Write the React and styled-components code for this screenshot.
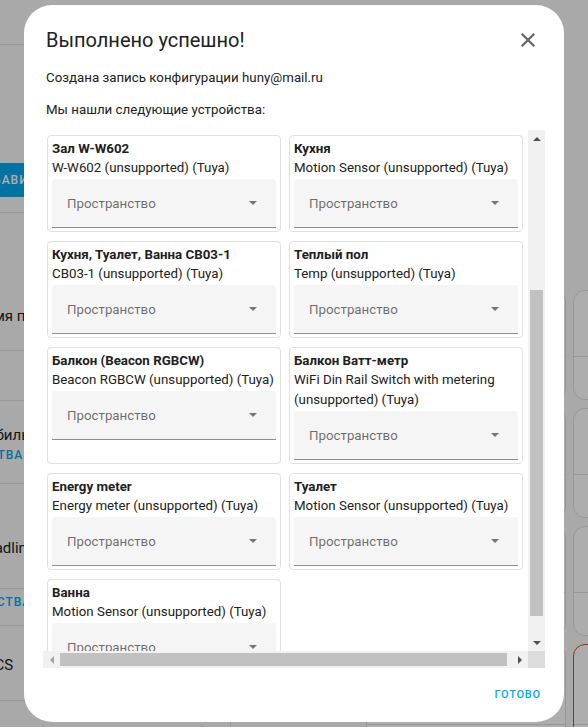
import React from 'react';
import styled, { createGlobalStyle } from 'styled-components';
import { Box, Globe } from 'lucide-react';

const GlobalStyle = createGlobalStyle`
  * { box-sizing: border-box; }
  html, body { margin: 0; height: 100%; overflow: hidden; }
  body {
    background: #fafafa;
    font-family: Roboto, "Noto Sans", "DejaVu Sans", sans-serif;
    color: #212121;
  }
`;

const devices = [
  { name: 'Зал W-W602', model: 'W-W602 (unsupported) (Tuya)' },
  { name: 'Кухня', model: 'Motion Sensor (unsupported) (Tuya)' },
  { name: 'Кухня, Туалет, Ванна CB03-1', model: 'CB03-1 (unsupported) (Tuya)' },
  { name: 'Теплый пол', model: 'Temp (unsupported) (Tuya)' },
  { name: 'Балкон (Beacon RGBCW)', model: 'Beacon RGBCW (unsupported) (Tuya)' },
  { name: 'Балкон Ватт-метр', model: 'WiFi Din Rail Switch with metering (unsupported) (Tuya)' },
  { name: 'Energy meter', model: 'Energy meter (unsupported) (Tuya)' },
  { name: 'Туалет', model: 'Motion Sensor (unsupported) (Tuya)' },
  { name: 'Ванна', model: 'Motion Sensor (unsupported) (Tuya)' },
];

const arrowPoints = {
  up: '0,4 4,0 8,4',
  down: '0,0 8,0 4,4',
  left: '4,0 4,8 0,4',
  right: '0,0 0,8 4,4',
};

const ScrollArrow = ({ dir, color }) => {
  const flat = dir === 'up' || dir === 'down';
  return (
    <svg width={flat ? 8 : 4} height={flat ? 4 : 8} viewBox={flat ? '0 0 8 4' : '0 0 4 8'}>
      <polygon points={arrowPoints[dir]} fill={color} />
    </svg>
  );
};

export default function App() {
  return (
    <>
      <GlobalStyle />
      <Backdrop>
        <SidePane>
          <PaneHeader />
          <ActionArea>
            <AddButton type="button">Добавить</AddButton>
          </ActionArea>
          <PaneRow $height={138} $pad={93}>
            <PaneText $inset={73}>Имя пользователя</PaneText>
          </PaneRow>
          <PaneRow $height={50} $pad={0} />
          <PaneRow $height={83} $pad={24}>
            <PaneText $inset={64}>Мобильное приложение</PaneText>
            <PaneLink $inset={26}>Устройства</PaneLink>
          </PaneRow>
          <PaneRow $height={105} $pad={54}>
            <PaneText $inset={66}>Headlines</PaneText>
          </PaneRow>
          <PaneRow $height={37} $pad={3}>
            <PaneLink $inset={34}>Устройства</PaneLink>
          </PaneRow>
          <PaneRow $height={75} $pad={29}>
            <PaneText $inset={64}>HACS</PaneText>
          </PaneRow>
          <PaneFooter>
            <Box size={18} color="#ff9800" />
            <Globe size={20} color="#727272" style={{ marginLeft: 17 }} />
            <FooterDivider />
            <PaneLink $inset={31}>10 служб</PaneLink>
          </PaneFooter>
        </SidePane>
        <TilePane>
          <Tile><TileTop $h={66} /></Tile>
          <Tile><TileTop $h={66} /></Tile>
          <Tile><TileTop $h={66} /></Tile>
          <Tile><TileTop $h={66} /></Tile>
          <Tile><TileTop $h={66} /></Tile>
          <Tile><TileTop $h={66} /></Tile>
          <Tile><TileTop $h={80} /></Tile>
          <Tile $alert><TileTop $h={80} /></Tile>
        </TilePane>
      </Backdrop>

      <Overlay>
        <Dialog role="dialog">
          <Header>
            <Title>Выполнено успешно!</Title>
            <CloseButton type="button" aria-label="Закрыть">
              <svg width="24" height="24" viewBox="0 0 24 24">
                <path
                  fill="currentColor"
                  d="M19,6.41L17.59,5L12,10.59L6.41,5L5,6.41L10.59,12L5,17.59L6.41,19L12,13.41L17.59,19L19,17.59L13.41,12L19,6.41Z"
                />
              </svg>
            </CloseButton>
          </Header>
          <Message $gap={14}>Создана запись конфигурации huny@mail.ru</Message>
          <Message $gap={12}>Мы нашли следующие устройства:</Message>

          <ScrollFrame>
            <Viewport>
              <DeviceGrid>
                {devices.map((d) => (
                  <DeviceCard key={d.name}>
                    <DeviceName>{d.name}</DeviceName>
                    <DeviceModel>{d.model}</DeviceModel>
                    <AreaSelect>
                      <SelectLabel>Пространство</SelectLabel>
                      <svg width="8" height="4" viewBox="0 0 10 5">
                        <path d="M0 0h10L5 5z" fill="#757575" />
                      </svg>
                    </AreaSelect>
                  </DeviceCard>
                ))}
              </DeviceGrid>
            </Viewport>
            <VBar>
              <BarButton><ScrollArrow dir="up" color="#505050" /></BarButton>
              <VThumb />
              <BarButton $end><ScrollArrow dir="down" color="#505050" /></BarButton>
            </VBar>
            <HBar>
              <BarButton><ScrollArrow dir="left" color="#a3a3a3" /></BarButton>
              <HThumb />
              <BarButton $end><ScrollArrow dir="right" color="#505050" /></BarButton>
            </HBar>
            <Corner />
          </ScrollFrame>

          <Actions>
            <DoneButton type="button">Готово</DoneButton>
          </Actions>
        </Dialog>
      </Overlay>
    </>
  );
}

// Background page
const Backdrop = styled.div`
  display: grid;
  grid-template-columns: 419px 407px;
  column-gap: 37px;
  margin-left: -90px;
  height: 100vh;
`;

const SidePane = styled.div`
  display: flex;
  flex-direction: column;
`;

const PaneHeader = styled.div`
  flex: none;
  height: 45px;
  border-bottom: 1px solid #e0e0e0;
`;

const ActionArea = styled.div`
  flex: none;
  height: 168px;
  padding: 118px 0 0 48px;
  border-bottom: 1px solid #e0e0e0;
`;

const AddButton = styled.button`
  height: 34px;
  padding: 0 16px;
  border: none;
  border-radius: 4px;
  background: #03a9f4;
  color: #fff;
  font-family: Roboto, sans-serif;
  font-size: 12px;
  font-weight: 500;
  letter-spacing: 1px;
  text-transform: uppercase;
`;

const PaneRow = styled.div`
  flex: none;
  height: ${(p) => p.$height}px;
  padding-top: ${(p) => p.$pad}px;
  border-bottom: 1px solid #e0e0e0;
  display: flex;
  flex-direction: column;
`;

const PaneText = styled.div`
  margin-left: ${(p) => p.$inset}px;
  font-size: 15px;
  line-height: 20px;
  white-space: nowrap;
  color: #212121;
`;

const PaneLink = styled.div`
  margin-left: ${(p) => p.$inset}px;
  font-size: 12px;
  line-height: 20px;
  font-weight: 500;
  letter-spacing: 1px;
  text-transform: uppercase;
  white-space: nowrap;
  color: #03a9f4;
`;

const PaneFooter = styled.div`
  display: flex;
  align-items: center;
  padding: 19px 0 0 250px;
`;

const FooterDivider = styled.div`
  width: 1px;
  height: 30px;
  margin-left: 18px;
  background: #e0e0e0;
`;

const TilePane = styled.div`
  display: grid;
  grid-template-columns: 200px 200px;
  grid-auto-rows: 110px;
  column-gap: 7px;
  row-gap: 8px;
  padding-top: 290px;
  align-content: start;
`;

const Tile = styled.div`
  border: 1px solid ${(p) => (p.$alert ? '#db4437' : '#e0e0e0')};
  border-radius: 12px;
  background: #fff;
`;

const TileTop = styled.div`
  height: ${(p) => p.$h}px;
  border-bottom: 1px solid #e0e0e0;
`;

// Dialog
const Overlay = styled.div`
  position: fixed;
  inset: 0;
  background: rgba(0, 0, 0, 0.32);
  display: flex;
  align-items: center;
  justify-content: center;
`;

const Dialog = styled.div`
  width: 540px;
  height: 717px;
  padding: 0 19px;
  background: #fff;
  border-radius: 28px;
  display: flex;
  flex-direction: column;
  color: #212121;
`;

const Header = styled.div`
  display: flex;
  align-items: center;
  justify-content: space-between;
  padding: 21px 5px 0 3px;
`;

const Title = styled.h2`
  margin: 0;
  font-size: 20px;
  font-weight: 400;
  line-height: 28px;
  color: #212121;
`;

const CloseButton = styled.button`
  width: 24px;
  height: 24px;
  padding: 0;
  border: none;
  background: none;
  color: #5f5f5f;
  display: flex;
`;

const Message = styled.p`
  margin: ${(p) => p.$gap}px 0 0;
  padding-left: 3px;
  font-size: 13.3px;
  line-height: 20px;
`;

const ScrollFrame = styled.div`
  flex: none;
  height: 538px;
  margin-top: 10px;
  display: grid;
  grid-template-columns: 1fr 17px;
  grid-template-rows: 1fr 17px;
`;

const Viewport = styled.div`
  overflow: hidden;
`;

const DeviceGrid = styled.div`
  display: grid;
  grid-template-columns: 234px 234px;
  gap: 9px 8px;
  padding: 5px 0 0 4px;
`;

const DeviceCard = styled.div`
  border: 1px solid #e0e0e0;
  border-radius: 4px;
  padding: 3px 4px 3px;
  display: flex;
  flex-direction: column;
`;

const DeviceName = styled.div`
  font-size: 13.3px;
  font-weight: 700;
  line-height: 19px;
`;

const DeviceModel = styled.div`
  font-size: 13.3px;
  line-height: 20px;
`;

const AreaSelect = styled.div`
  margin-top: 1px;
  height: 49px;
  padding: 0 19px 0 15px;
  background: #f5f5f5;
  border-bottom: 1px solid rgba(0, 0, 0, 0.42);
  border-radius: 4px 4px 0 0;
  display: flex;
  align-items: center;
  justify-content: space-between;
`;

const SelectLabel = styled.span`
  font-size: 13.3px;
  color: rgba(0, 0, 0, 0.58);
`;

const VBar = styled.div`
  grid-column: 2;
  grid-row: 1;
  background: #f1f1f1;
  display: flex;
  flex-direction: column;
`;

const HBar = styled.div`
  grid-column: 1;
  grid-row: 2;
  background: #f1f1f1;
  display: flex;
`;

const BarButton = styled.div`
  flex: none;
  width: 17px;
  height: 17px;
  margin-top: ${(p) => (p.$end ? 'auto' : '0')};
  display: flex;
  align-items: center;
  justify-content: center;
  ${HBar} & {
    margin-top: 0;
    margin-left: ${(p) => (p.$end ? 'auto' : '0')};
  }
`;

const VThumb = styled.div`
  height: 326px;
  margin: 143px 2px 0;
  background: #c1c1c1;
`;

const HThumb = styled.div`
  width: 447px;
  margin: 2px 0;
  background: #c1c1c1;
`;

const Corner = styled.div`
  grid-column: 2;
  grid-row: 2;
  background: #dcdcdc;
`;

const Actions = styled.div`
  flex: none;
  height: 36px;
  margin-top: 8px;
  display: flex;
  justify-content: flex-end;
`;

const DoneButton = styled.button`
  height: 36px;
  padding: 0 4px;
  border: none;
  background: none;
  color: #03a9f4;
  font-family: Roboto, sans-serif;
  font-size: 11px;
  font-weight: 500;
  letter-spacing: 0.8px;
  text-transform: uppercase;
`;
